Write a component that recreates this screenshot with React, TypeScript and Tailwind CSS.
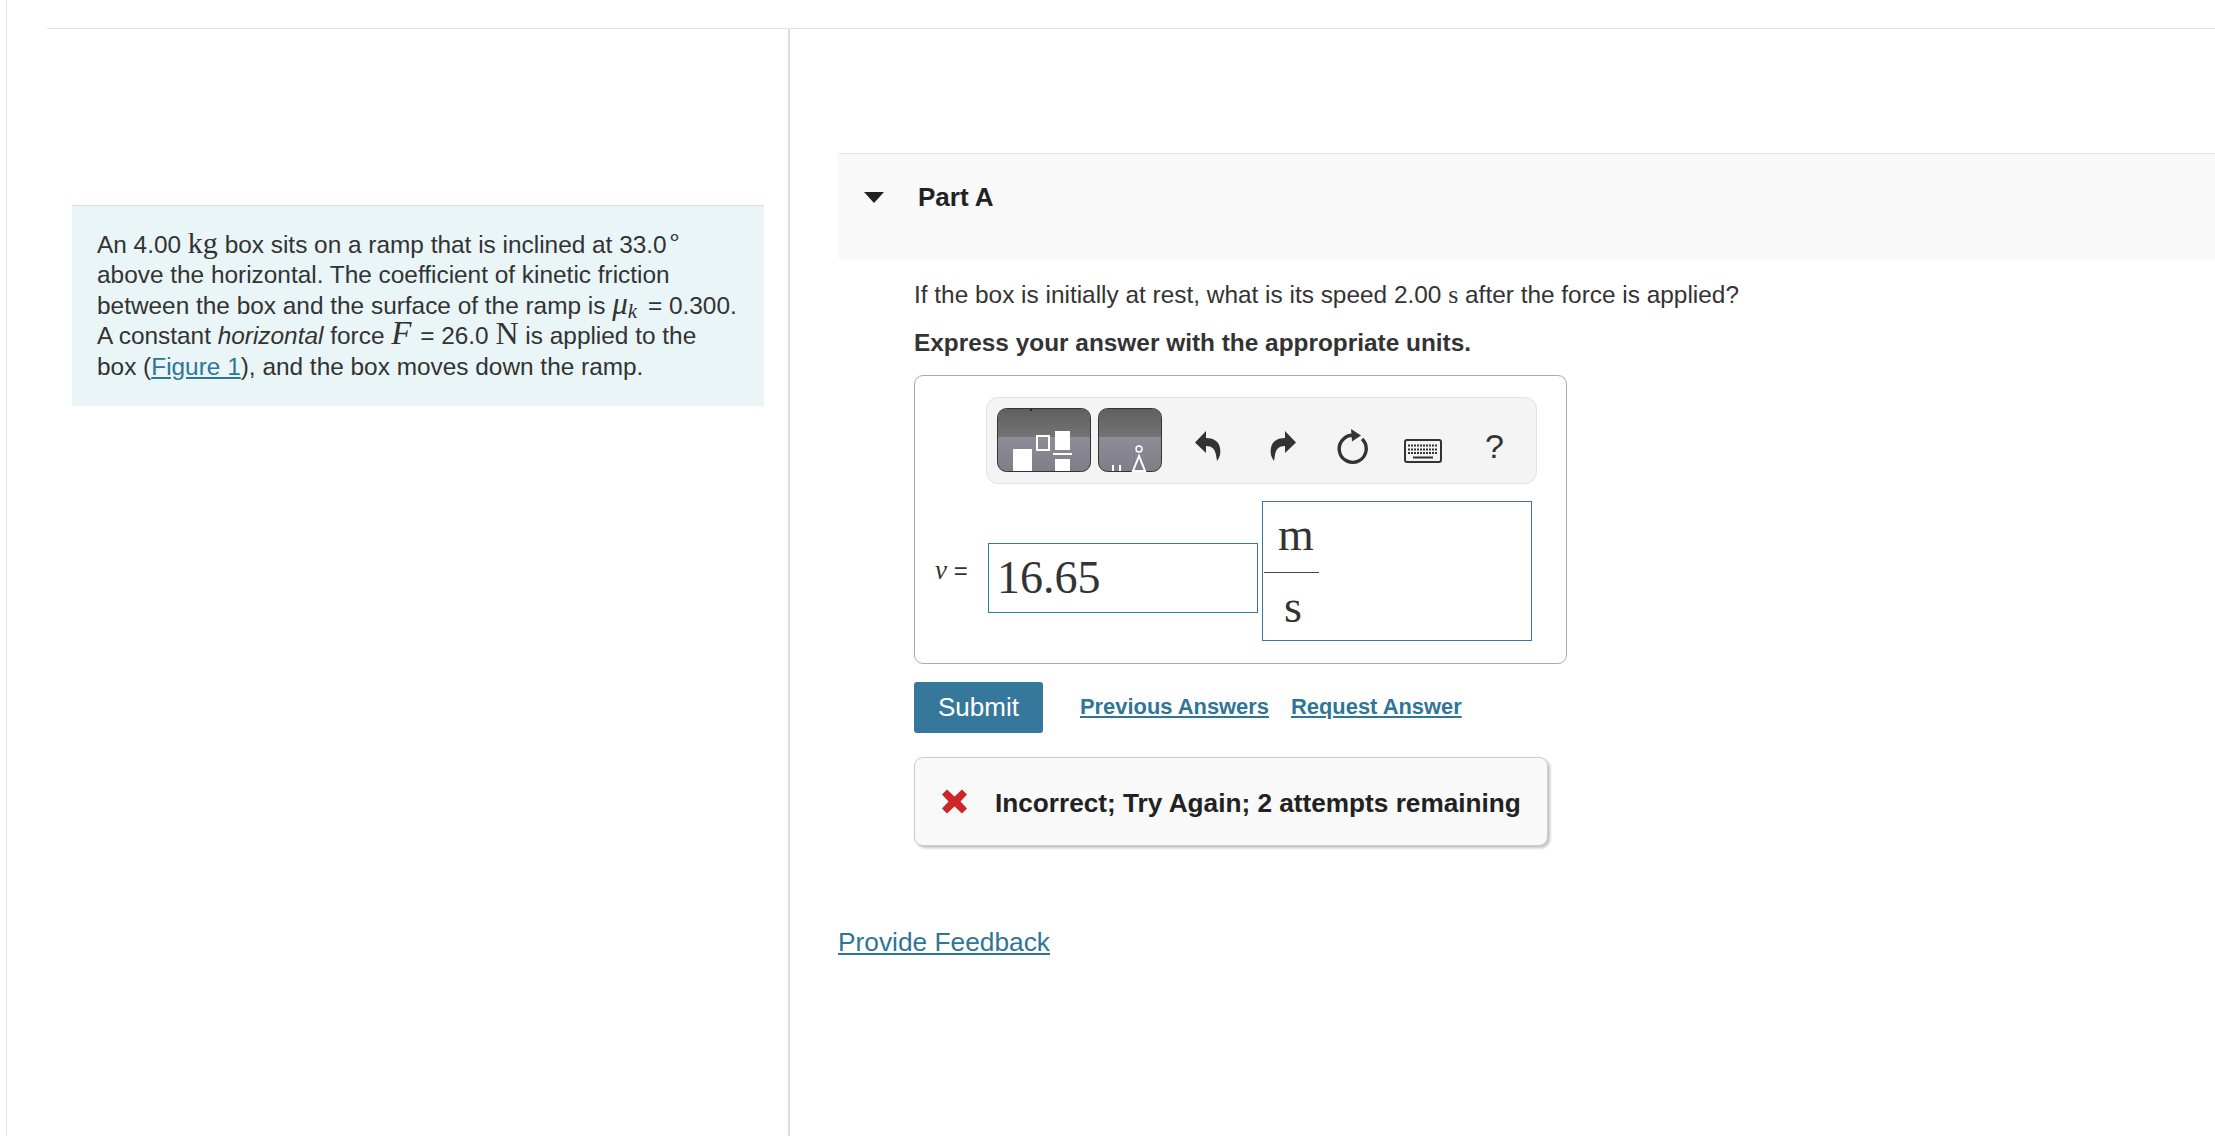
const sans = "font-['Liberation_Sans',Arial,sans-serif]";
const serif = "font-['Liberation_Serif','Times_New_Roman',serif]";

const ThumbGradients = ({ id }: { id: string }) => (
  <defs>
    <linearGradient id={`${id}-top`} x1="0" y1="0" x2="0" y2="1">
      <stop offset="0" stopColor="#5f5f5f" />
      <stop offset="1" stopColor="#747474" />
    </linearGradient>
    <linearGradient id={`${id}-bottom`} x1="0" y1="0" x2="0" y2="1">
      <stop offset="0" stopColor="#9a99a4" />
      <stop offset="1" stopColor="#7f7e88" />
    </linearGradient>
  </defs>
);

const TemplatesIcon = () => (
  <svg width="94" height="64" viewBox="0 0 94 64" className="block">
    <ThumbGradients id="tpl" />
    <rect x="0.5" y="0.5" width="93" height="63" rx="9" fill="url(#tpl-bottom)" stroke="#333" />
    <path d="M1 29V9a8 8 0 0 1 8-8h76a8 8 0 0 1 8 8v20z" fill="url(#tpl-top)" />
    <rect x="33" y="1" width="2" height="2" fill="#222" />
    <rect x="16" y="41" width="19" height="22" fill="#fff" />
    <rect x="40" y="28" width="12" height="14" fill="none" stroke="#fff" strokeWidth="2" />
    <rect x="58" y="23" width="15" height="19" fill="#fff" />
    <rect x="56" y="45" width="19" height="2" fill="#fff" />
    <rect x="58" y="51" width="15" height="12" fill="#fff" />
  </svg>
);

const SymbolsIcon = () => (
  <svg width="64" height="64" viewBox="0 0 64 64" className="block">
    <ThumbGradients id="sym" />
    <rect x="0.5" y="0.5" width="63" height="63" rx="9" fill="url(#sym-bottom)" stroke="#333" />
    <path d="M1 29V9a8 8 0 0 1 8-8h46a8 8 0 0 1 8 8v20z" fill="url(#sym-top)" />
    <path d="M15 57v6M22 57v6" stroke="#fff" strokeWidth="2" />
    <circle cx="41" cy="41" r="3" fill="none" stroke="#fff" strokeWidth="1.5" />
    <path d="M41 48l-6 15h12z" fill="none" stroke="#fff" strokeWidth="2" />
  </svg>
);

const UndoIcon = () => (
  <svg width="28" height="32" viewBox="0 0 28 32" className="block">
    <path d="M12 1L1 12.500 12 23v-7c6 0 9 3 10 9l1 6c3-4 4-8 3-13-1-7-7-10-14-10z" fill="#333" />
  </svg>
);

const RedoIcon = () => (
  <svg width="28" height="32" viewBox="0 0 28 32" className="block">
    <path d="M16 1l11 11.500L16 23v-7c-6 0-9 3-10 9l-1 6c-3-4-4-8-3-13 1-7 7-10 14-10z" fill="#333" />
  </svg>
);

const ResetIcon = () => (
  <svg width="34" height="36" viewBox="0 0 34 36" className="block">
    <path d="M20 6.500a13.500 13.500 0 1 0 7 3.500" fill="none" stroke="#333" strokeWidth="3.400" />
    <path d="M16 0l10 6.500-9 6z" fill="#333" />
  </svg>
);

const KeyboardIcon = () => (
  <svg width="38" height="24" viewBox="0 0 38 24" className="block">
    <rect x="1" y="1" width="36" height="22" rx="2" fill="none" stroke="#333" strokeWidth="2" />
    <path d="M4 6.500h30M4 10.500h30M4 14h30" stroke="#333" strokeWidth="2" strokeDasharray="2 1" />
    <path d="M9 18.500h20" stroke="#333" strokeWidth="2" />
  </svg>
);

const CrossIcon = () => (
  <svg width="27" height="27" viewBox="0 0 27 27" className="block">
    <path d="M6 1.500l7.500 7 7.500-7 5 5-6.500 7 6.500 7-5 5-7.500-7-7.500 7-5-5 6.500-7-6.500-7z" fill="#cb2727" />
  </svg>
);

export default function App() {
  return (
    <div className={`${sans} h-[1136px] w-full overflow-hidden bg-white text-[#333]`}>
      <div className="ml-[6px] h-full border-l border-[#e3e3e3] pl-[40px] pt-[28px]">
        <div className="flex h-full border-t border-[#e2e4e8]">
          {/* problem statement */}
          <div className="w-[743px] shrink-0 border-r-2 border-[#d5dcec] pl-[25px] pr-[24px] pt-[176px]">
            <div className="h-[201px] border-t border-[#dcdfe0] bg-[#e9f5f7] px-[25px] pt-[24px] text-[24.400px] leading-[30.400px] whitespace-nowrap">
              <p>
                An 4.00 <span className={`${serif} text-[30px] leading-[20px]`}>kg</span> box sits on a ramp that is inclined at 33.0
                <span className="relative -top-[8px] text-[24px] leading-[20px]">∘</span>
                <br />
                above the horizontal. The coefficient of kinetic friction
                <br />
                between the box and the surface of the ramp is{" "}
                <span className={`${serif} pr-[4px] italic text-[31px] leading-[20px]`}>
                  μ<span className="relative top-[4px] text-[21px] leading-none">k</span>
                </span>{" "}
                = 0.300.
                <br />
                A constant <em>horizontal</em> force <span className={`${serif} pr-[2px] text-[33px] leading-[20px] italic`}>F</span> = 26.0{" "}
                <span className={`${serif} text-[32px] leading-[20px]`}>N</span> is applied to the
                <br />
                box (<a className="text-[#2f7596] underline">Figure 1</a>), and the box moves down the ramp.
              </p>
            </div>
          </div>

          {/* part A */}
          <div className="min-w-0 flex-1 pl-[48px] pt-[124px]">
            <div className="flex h-[106px] items-start border-t border-[#e4e4e4] bg-[#f9f9f9] pl-[26px] pt-[29px]">
              <span className="mt-[9px] h-0 w-0 border-x-[10px] border-t-[11px] border-x-transparent border-t-[#222]" />
              <h2 className="ml-[34px] text-[26px] leading-[28px] font-bold text-[#222]">Part A</h2>
            </div>

            <div className="pl-[76px]">
              <p className="mt-[22px] text-[24.400px] leading-[28px]">
                If the box is initially at rest, what is its speed 2.00 <span className={`${serif} text-[26px] leading-none`}>s</span> after the force is applied?
              </p>
              <p className="mt-[20px] text-[24.400px] leading-[28px] font-bold">Express your answer with the appropriate units.</p>

              <div className="mt-[18px] h-[289px] w-[653px] rounded-[9px] border border-[#aaa] pl-[71px] pt-[21px]">
                <div className="flex h-[87px] w-[551px] items-start rounded-[12px] border border-[#e2e2e2] bg-[#f4f4f4] pl-[10px] pt-[10px]">
                  <TemplatesIcon />
                  <div className="ml-[7px]">
                    <SymbolsIcon />
                  </div>
                  <div className="ml-[32px] mt-[22px]">
                    <UndoIcon />
                  </div>
                  <div className="ml-[47px] mt-[22px]">
                    <RedoIcon />
                  </div>
                  <div className="ml-[38px] mt-[21px]">
                    <ResetIcon />
                  </div>
                  <div className="ml-[35px] mt-[31px]">
                    <KeyboardIcon />
                  </div>
                  <span className="ml-[43px] mt-[21px] text-[34px] leading-none">?</span>
                </div>

                <div className="mt-[17px] flex items-start">
                  <span className={`${serif} -ml-[51px] mt-[55px] w-[40px] text-[27px] leading-[28px] whitespace-nowrap`}>
                    <i>v</i> <span className={`${sans} text-[24px]`}>=</span>
                  </span>
                  <div className={`${serif} ml-[13px] mt-[42px] flex h-[70px] w-[270px] items-center border border-[#36789b] pb-[2px] pl-[8px] text-[46px]`}>16.65</div>
                  <div className={`${serif} ml-[4px] flex h-[140px] w-[270px] flex-col border border-[#36789b] text-[46px] leading-none`}>
                    <span className="mt-[10px] pl-[15px] leading-[46px]">m</span>
                    <span className="mt-[14px] ml-[1px] h-px w-[55px] bg-[#444]" />
                    <span className="mt-[9px] pl-[21px] leading-[50px]">s</span>
                  </div>
                </div>
              </div>

              <div className="mt-[18px] flex items-center">
                <button className="h-[51px] w-[129px] rounded-[3px] bg-[#36789b] text-[26px] text-white">Submit</button>
                <a className="ml-[37px] -mt-[1px] text-[21.900px] font-bold text-[#2f7596] underline">Previous Answers</a>
                <a className="ml-[22px] -mt-[1px] text-[21.900px] font-bold text-[#2f7596] underline">Request Answer</a>
              </div>

              <div className="mt-[24px] flex h-[89px] w-[634px] items-center rounded-[9px] border border-[#ccc] bg-[#f9f9f9] pl-[26px] shadow-[2px_2px_3px_rgba(0,0,0,0.25)]">
                <CrossIcon />
                <span className="ml-[27px] mt-[5px] text-[26.200px] font-bold whitespace-nowrap text-[#222]">Incorrect; Try Again; 2 attempts remaining</span>
              </div>
            </div>

            <a className="mt-[80px] block w-fit text-[26.300px] leading-[32px] text-[#2f7596] underline">Provide Feedback</a>
          </div>
        </div>
      </div>
    </div>
  );
}
